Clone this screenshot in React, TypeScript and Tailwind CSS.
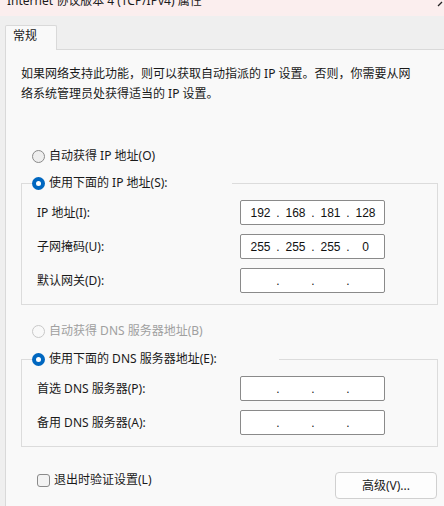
import { Fragment } from 'react';

const Radio = ({ checked, disabled }: { checked?: boolean; disabled?: boolean }) => {
  if (checked)
    return (
      <span className="flex h-[13px] w-[13px] shrink-0 items-center justify-center rounded-full bg-[#0067c0]">
        <span className="h-[5px] w-[5px] rounded-full bg-white" />
      </span>
    );
  return (
    <span
      className={
        disabled
          ? 'h-[13px] w-[13px] shrink-0 rounded-full border border-[#c8c8c8] bg-[#f9f9f9]'
          : 'h-[13px] w-[13px] shrink-0 rounded-full border border-[#8a8a8a] bg-[#eeeeee]'
      }
    />
  );
};

const IpField = ({ parts }: { parts: string[] }) => (
  <div className="flex h-[25px] w-[145px] shrink-0 items-center rounded-[2px] border border-[#8a8a8a] bg-white pl-[7px] font-['Liberation_Sans',sans-serif] text-[12px] text-[#111]">
    {parts.map((p, i) => (
      <Fragment key={i}>
        <span className="w-[25px] text-center">{p}</span>
        {i < 3 && <span className="w-[10px] text-center">.</span>}
      </Fragment>
    ))}
  </div>
);

const Row = ({ label, parts }: { label: string; parts: string[] }) => (
  <div className="flex h-[25px] items-center">
    <span className="w-[203px] shrink-0">{label}</span>
    <IpField parts={parts} />
  </div>
);

const empty = ['', '', '', ''];

export default function App() {
  return (
    <div className="h-[506px] w-[444px] overflow-hidden bg-[#efefef] font-['Noto_Sans','Noto_Sans_CJK_SC',sans-serif] text-[12px] leading-[16px] text-[#1a1a1a]">
      {/* 标题栏 */}
      <div className="flex h-[16px] justify-between overflow-hidden bg-[#fbeeee]">
        <div className="-mt-[7px] pl-[7px] leading-[16px] whitespace-nowrap">
          Internet 协议版本 4 (TCP/IPv4) 属性
        </div>
        <svg width="6" height="6" viewBox="0 0 6 6" className="mr-[1px] mt-[1px]">
          <path d="M1 5 L5 1" stroke="#222" strokeWidth="1.2" />
        </svg>
      </div>

      {/* 标签页 */}
      <div className="flex h-[33px] items-end pl-[5px]">
        <div className="relative z-10 -mb-px h-[25px] w-[52px] rounded-t-[2px] border border-b-0 border-[#d9d9d9] bg-[#f9f9f9] pt-[2px] pl-[7px]">
          常规
        </div>
      </div>

      {/* 内容 */}
      <div className="ml-[5px] h-[458px] border-t border-l border-[#d9d9d9] bg-[#f9f9f9] pl-[15px]">
        <p className="pt-[14px] leading-[20px]">
          如果网络支持此功能，则可以获取自动指派的 IP 设置。否则，你需要从网
          <br />
          络系统管理员处获得适当的 IP 设置。
        </p>

        <div className="mt-[44px] ml-[11px] flex h-[16px] items-center gap-[4px]">
          <Radio />
          <span>自动获得 IP 地址(O)</span>
        </div>

        <fieldset className="mt-[11px] w-[417px] border border-[#dcdcdc] px-[10px] pb-[11px]">
          <legend className="flex h-[16px] w-[200px] items-center gap-[4px]">
            <Radio checked />
            <span>使用下面的 IP 地址(S):</span>
          </legend>
          <div className="mt-[9px] flex flex-col gap-[9px] pl-[5px]">
            <Row label="IP 地址(I):" parts={['192', '168', '181', '128']} />
            <Row label="子网掩码(U):" parts={['255', '255', '255', '0']} />
            <Row label="默认网关(D):" parts={empty} />
          </div>
        </fieldset>

        <div className="mt-[18px] ml-[11px] flex h-[16px] items-center gap-[4px] text-[#a0a0a0]">
          <Radio disabled />
          <span>自动获得 DNS 服务器地址(B)</span>
        </div>

        <fieldset className="mt-[12px] w-[417px] border border-[#dcdcdc] px-[10px] pb-[11px]">
          <legend className="flex h-[16px] w-[247px] items-center gap-[4px]">
            <Radio checked />
            <span>使用下面的 DNS 服务器地址(E):</span>
          </legend>
          <div className="mt-[9px] flex flex-col gap-[9px] pl-[5px]">
            <Row label="首选 DNS 服务器(P):" parts={empty} />
            <Row label="备用 DNS 服务器(A):" parts={empty} />
          </div>
        </fieldset>

        <div className="mt-[25px] flex w-[417px] items-start justify-between">
          <label className="mt-[1px] ml-[16px] flex h-[14px] items-center gap-[4px]">
            <span className="h-[13px] w-[13px] rounded-[3px] border border-[#8a8a8a] bg-[#f3f3f3]" />
            <span>退出时验证设置(L)</span>
          </label>
          <button className="mr-[1px] h-[27px] w-[102px] rounded-[4px] border border-[#d0d0d0] bg-[#fdfdfd] text-[12px]">
            高级(V)...
          </button>
        </div>
      </div>
    </div>
  );
}
